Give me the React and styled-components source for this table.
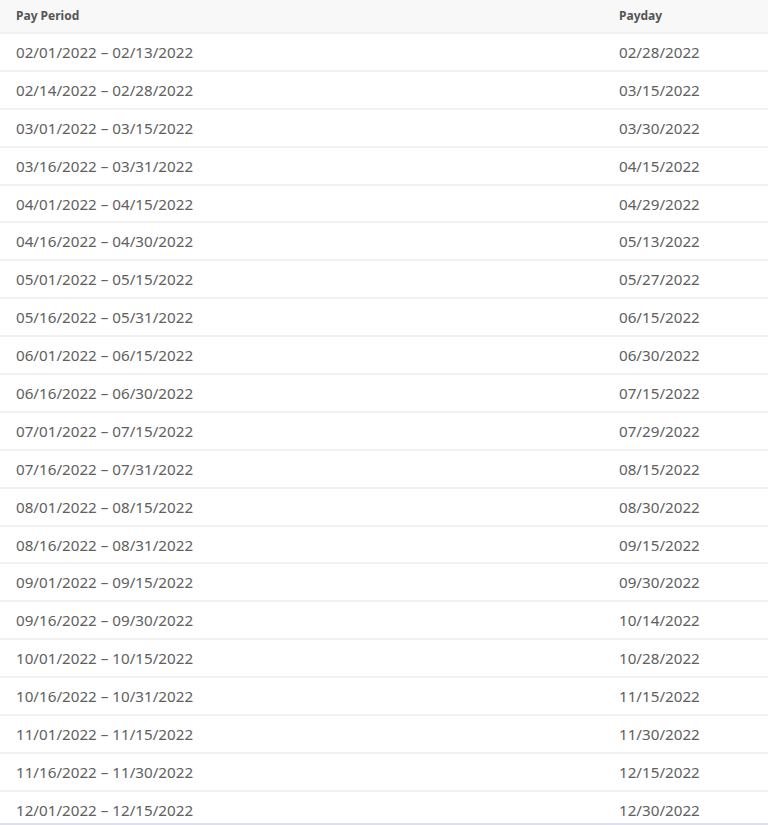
import React from 'react';
import styled, { createGlobalStyle } from 'styled-components';

const GlobalStyle = createGlobalStyle`
  html, body {
    margin: 0;
    padding: 0;
    background: #fff;
  }
  body {
    font-family: "Noto Sans", "Open Sans", sans-serif;
  }
`

const Page = styled.div`
  display: flex;
  flex-direction: column;
  height: 825px;
  overflow: hidden;
`

const Table = styled.div`
  flex: 1;
  overflow: hidden;
  display: flex;
  flex-direction: column;
`

const Row = styled.div`
  display: grid;
  grid-template-columns: 1fr 133px;
  align-items: center;
  flex-shrink: 0;
  padding: 0 16px;
  height: ${props => props.header ? '32px' : '35.9px'};
  background: ${props => props.header ? '#f8f8f8' : '#fff'};
  border-bottom: 2px solid #f1f1f1;
`

const HeadCell = styled.div`
  font-size: 12px;
  font-weight: 700;
  color: #555;
  padding-bottom: 2px;
`

const Cell = styled.div`
  font-size: 15.2px;
  color: #606060;
  white-space: nowrap;
`

const BottomBar = styled.div`
  height: 2px;
  flex-shrink: 0;
  background: #dcdff0;
`

const periods = [
  ['02/01/2022', '02/13/2022', '02/28/2022'],
  ['02/14/2022', '02/28/2022', '03/15/2022'],
  ['03/01/2022', '03/15/2022', '03/30/2022'],
  ['03/16/2022', '03/31/2022', '04/15/2022'],
  ['04/01/2022', '04/15/2022', '04/29/2022'],
  ['04/16/2022', '04/30/2022', '05/13/2022'],
  ['05/01/2022', '05/15/2022', '05/27/2022'],
  ['05/16/2022', '05/31/2022', '06/15/2022'],
  ['06/01/2022', '06/15/2022', '06/30/2022'],
  ['06/16/2022', '06/30/2022', '07/15/2022'],
  ['07/01/2022', '07/15/2022', '07/29/2022'],
  ['07/16/2022', '07/31/2022', '08/15/2022'],
  ['08/01/2022', '08/15/2022', '08/30/2022'],
  ['08/16/2022', '08/31/2022', '09/15/2022'],
  ['09/01/2022', '09/15/2022', '09/30/2022'],
  ['09/16/2022', '09/30/2022', '10/14/2022'],
  ['10/01/2022', '10/15/2022', '10/28/2022'],
  ['10/16/2022', '10/31/2022', '11/15/2022'],
  ['11/01/2022', '11/15/2022', '11/30/2022'],
  ['11/16/2022', '11/30/2022', '12/15/2022'],
  ['12/01/2022', '12/15/2022', '12/30/2022'],
]

const App = () => (
  <Page>
    <GlobalStyle />
    <Table>
      <Row header>
        <HeadCell>Pay Period</HeadCell>
        <HeadCell>Payday</HeadCell>
      </Row>
      {periods.map(([start, end, payday]) =>
        <Row key={start}>
          <Cell>{start} – {end}</Cell>
          <Cell>{payday}</Cell>
        </Row>
      )}
    </Table>
    <BottomBar />
  </Page>
)

export default App;
